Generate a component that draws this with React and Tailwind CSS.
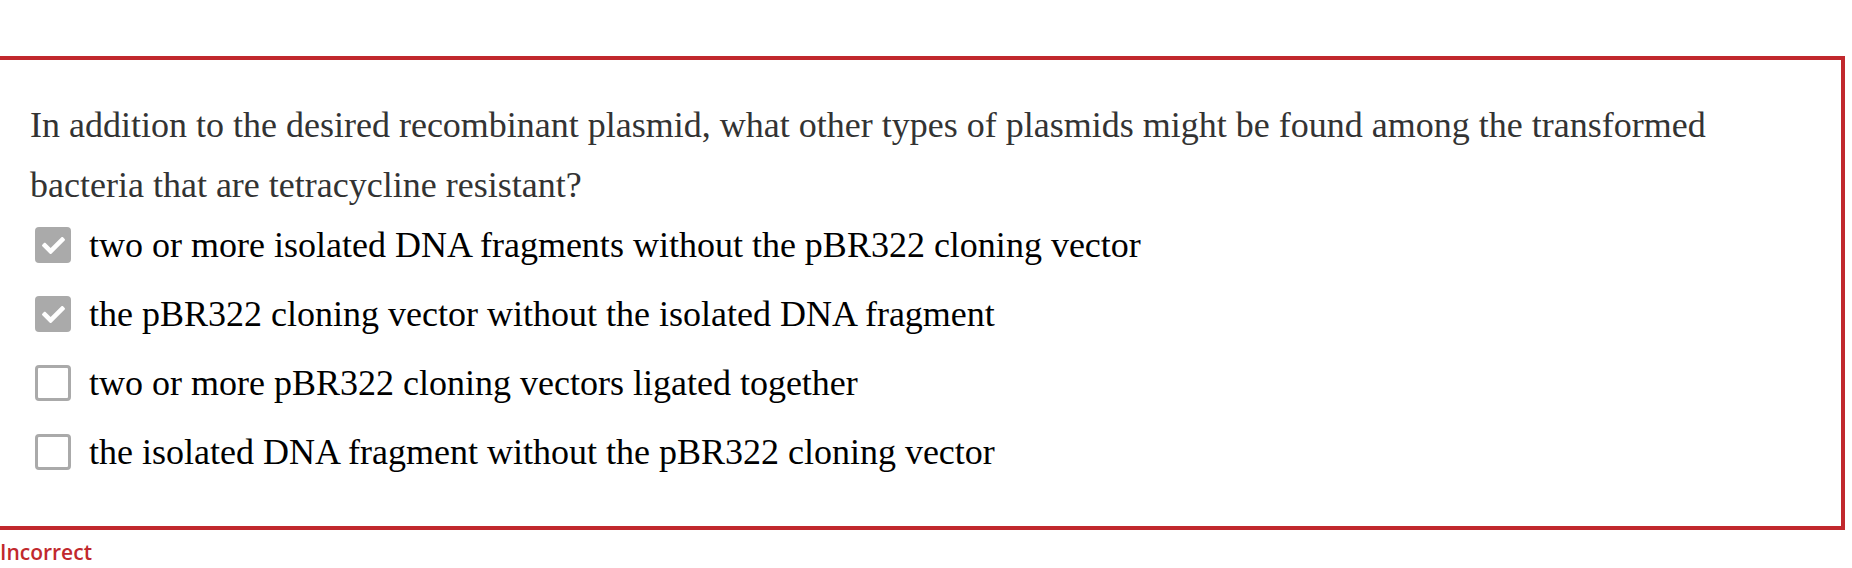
import React from 'react';
import { FaCheck } from 'react-icons/fa';

const options = [
  { text: 'two or more isolated DNA fragments without the pBR322 cloning vector', checked: true },
  { text: 'the pBR322 cloning vector without the isolated DNA fragment', checked: true },
  { text: 'two or more pBR322 cloning vectors ligated together', checked: false },
  { text: 'the isolated DNA fragment without the pBR322 cloning vector', checked: false },
];

function Checkbox({ checked }) {
  if (checked) {
    return (
      <span className="flex h-[36px] w-[36px] shrink-0 items-center justify-center rounded-[4px] bg-[#aaaaaa]">
        <FaCheck className="h-[23px] w-[23px] text-white" />
      </span>
    );
  }
  return <span className="block h-[36px] w-[36px] shrink-0 rounded-[4px] border-[3px] border-[#aaaaaa] bg-white" />;
}

export default function App() {
  return (
    <div className="h-[568px] w-full overflow-hidden bg-white pt-[56px]">
      <div className="-ml-1 h-[474px] w-[1849px] border-4 border-[#c1282d] pl-[30px] pt-[35px]">
        <p
          className="max-w-[1760px] text-[36px] leading-[60px] text-[#333333]"
          style={{ fontFamily: '"Liberation Serif", "Times New Roman", serif' }}
        >
          In addition to the desired recombinant plasmid, what other types of plasmids might be found among the
          transformed bacteria that are tetracycline resistant?
        </p>
        <div className="mt-[12px] flex flex-col gap-[33px] pl-[5px]">
          {options.map((opt) => (
            <label key={opt.text} className="flex items-center gap-[18px]">
              <Checkbox checked={opt.checked} />
              <span
                className="text-[36px] leading-[36px] text-black"
                style={{ fontFamily: '"Liberation Serif", "Times New Roman", serif' }}
              >
                {opt.text}
              </span>
            </label>
          ))}
        </div>
      </div>
      <div
        className="mt-[10px] text-[21px] font-semibold leading-[24px] text-[#c1282d]"
        style={{ fontFamily: '"Open Sans", sans-serif' }}
      >
        Incorrect
      </div>
    </div>
  );
}
